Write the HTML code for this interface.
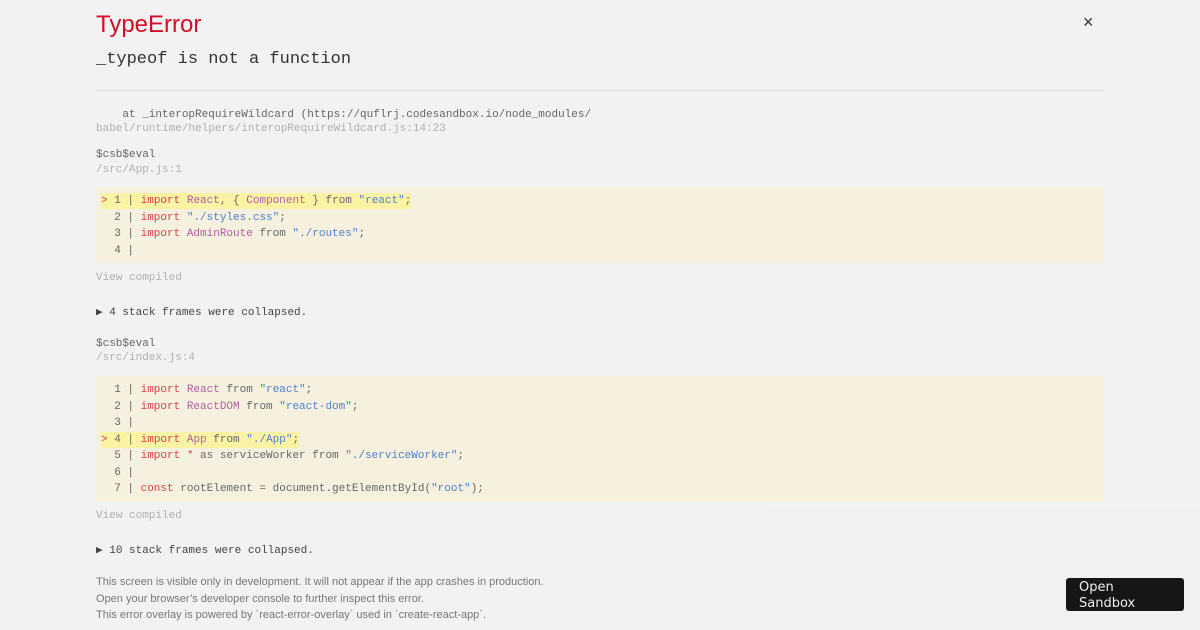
<!DOCTYPE html>
<html><head><meta charset="utf-8"><style>
body{margin:0;width:1200px;height:630px;background:#f2f2f2;position:relative;overflow:hidden;font-family:"Liberation Sans",sans-serif}
.a{position:absolute;white-space:pre;margin:0}
.m{font-family:"Liberation Mono",monospace}
.t{left:96px;top:11px;font-size:24px;color:#ce1126}
.msg{left:96px;top:50px;font-size:17px;color:#333}
.hr{position:absolute;left:96px;top:90px;width:1008px;height:1px;background:#ddd}
.s1{font-size:11px;color:#666}
.s2{font-size:11px;color:#b0b0b0}
.code{position:absolute;left:96px;width:1008px;background:#f5f1de}
.ln{font-size:11px;color:#666;height:16.4px;line-height:16.4px;padding-left:5px}
.hl{background:#fbf3a4;display:inline-block}
.k{color:#d6404d}.v{color:#b35ba6}.s{color:#4d7fcf}.r{color:#d6404d}
.foot{left:96px;top:574px;font-size:11px;color:#777;line-height:16.5px}
.btn{position:absolute;left:1066px;top:578px;width:118px;height:33px;background:#161616;border-radius:3px;color:#eee;font-family:"DejaVu Sans",sans-serif;font-size:13px;line-height:16px;box-sizing:border-box;padding:2px 0 0 13px}
.panel{position:absolute;left:765px;top:509px;width:435px;height:121px;background:#f1f1f1}
</style></head><body>
<div class="a t">TypeError</div>
<div class="a m msg">_typeof is not a function</div>
<div style="position:absolute;left:1083px;top:12px;font-size:18px;color:#333">×</div>
<div class="hr"></div>
<div class="a m s1" style="left:96px;top:109px">    at _interopRequireWildcard (https://quflrj.codesandbox.io/node_modules/</div>
<div class="a m s2" style="left:96px;top:123px">babel/runtime/helpers/interopRequireWildcard.js:14:23</div>
<div class="a m s1" style="left:96px;top:149px">$csb$eval</div>
<div class="a m s2" style="left:96px;top:164px">/src/App.js:1</div>
<div class="code m" style="top:187px;height:76px">
<div class="a ln" style="top:6px"><span class="hl"><span class="r">&gt;</span> 1 | <span class="k">import</span> <span class="v">React</span>, { <span class="v">Component</span> } from <span class="s">"react"</span>;</span></div>
<div class="a ln" style="top:22.5px">  2 | <span class="k">import</span> <span class="s">"./styles.css"</span>;</div>
<div class="a ln" style="top:39px">  3 | <span class="k">import</span> <span class="v">AdminRoute</span> from <span class="s">"./routes"</span>;</div>
<div class="a ln" style="top:55.5px">  4 |</div>
</div>
<div class="a m s2" style="left:96px;top:272px">View compiled</div>
<div class="a m s1" style="left:96px;top:305px;color:#444">▶ 4 stack frames were collapsed.</div>
<div class="a m s1" style="left:96px;top:338px">$csb$eval</div>
<div class="a m s2" style="left:96px;top:352px">/src/index.js:4</div>
<div class="code m" style="top:376px;height:126px">
<div class="a ln" style="top:6px">  1 | <span class="k">import</span> <span class="v">React</span> from <span class="s">"react"</span>;</div>
<div class="a ln" style="top:22.5px">  2 | <span class="k">import</span> <span class="v">ReactDOM</span> from <span class="s">"react-dom"</span>;</div>
<div class="a ln" style="top:39px">  3 |</div>
<div class="a ln" style="top:55.5px"><span class="hl"><span class="r">&gt;</span> 4 | <span class="k">import</span> <span class="v">App</span> from <span class="s">"./App"</span>;</span></div>
<div class="a ln" style="top:72px">  5 | <span class="k">import</span> <span class="k">*</span> as serviceWorker from <span class="s">"./serviceWorker"</span>;</div>
<div class="a ln" style="top:88.5px">  6 |</div>
<div class="a ln" style="top:105px">  7 | <span class="k">const</span> rootElement = document.getElementById(<span class="s">"root"</span>);</div>
</div>
<div class="panel"></div>
<div class="a m s2" style="left:96px;top:510px">View compiled</div>
<div class="a m s1" style="left:96px;top:543px;color:#444">▶ 10 stack frames were collapsed.</div>
<div class="a foot">This screen is visible only in development. It will not appear if the app crashes in production.
Open your browser’s developer console to further inspect this error.
This error overlay is powered by `react-error-overlay` used in `create-react-app`.</div>
<div class="btn">Open<br>Sandbox</div>
</body></html>
